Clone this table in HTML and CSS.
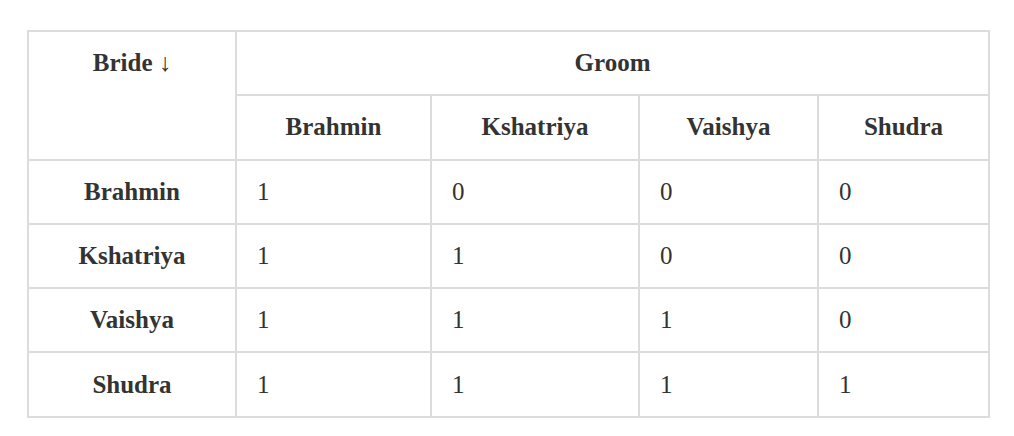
FILE: index.html
```html
<!DOCTYPE html>
<html>
<head>
<meta charset="utf-8">
<link rel="stylesheet" href="styles.css">
</head>
<body>
<table class="grid">
  <colgroup>
    <col class="c1"><col class="c2"><col class="c3"><col class="c4"><col class="c5">
  </colgroup>
  <thead>
    <tr><th rowspan="2" class="top">Bride <span class="arrow">↓</span></th><th colspan="4">Groom</th></tr>
    <tr><th>Brahmin</th><th>Kshatriya</th><th>Vaishya</th><th>Shudra</th></tr>
  </thead>
  <tbody>
    <tr><th>Brahmin</th><td>1</td><td>0</td><td>0</td><td>0</td></tr>
    <tr><th>Kshatriya</th><td>1</td><td>1</td><td>0</td><td>0</td></tr>
    <tr><th>Vaishya</th><td>1</td><td>1</td><td>1</td><td>0</td></tr>
    <tr><th>Shudra</th><td>1</td><td>1</td><td>1</td><td>1</td></tr>
  </tbody>
</table>
</body>
</html>
```
FILE: styles.css
```css
html, body { background: #fff; }
body { margin: 0; padding: 30px 0 0 27px; }
.grid {
  border-collapse: collapse;
  table-layout: fixed;
  width: 961px;
  font-family: "Liberation Serif", "Times New Roman", serif;
  font-size: 25px;
  line-height: 30px;
  color: #333;
}
.c1 { width: 208px; }
.c2 { width: 195px; }
.c3 { width: 208px; }
.c4 { width: 179px; }
.c5 { width: 171px; }
.grid th, .grid td {
  border: 2px solid #dcdcdc;
  padding: 16px 20px;
  height: 30.3px;
}
.grid th { font-weight: bold; text-align: center; }
.grid td { text-align: left; }
.grid th.top { vertical-align: top; }
.arrow { font-weight: normal; }
```
